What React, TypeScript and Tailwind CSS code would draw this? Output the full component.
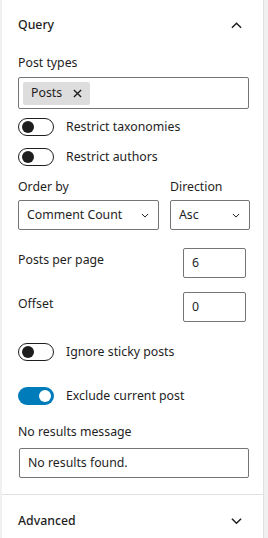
import React from "react";

function Chevron({ up = false, className = "" }: { up?: boolean; className?: string }) {
  return (
    <svg viewBox="0 0 12 8" className={className} fill="none" stroke="#1e1e1e" strokeWidth="1.6">
      {up ? <path d="M1 7 L6 2 L11 7" /> : <path d="M1 1.5 L6 6.5 L11 1.5" />}
    </svg>
  );
}

function Toggle({ on = false, label }: { on?: boolean; label: string }) {
  return (
    <div className="flex h-[20px] items-center">
      <div
        className={
          on
            ? "flex h-[18px] w-[36px] items-center justify-end rounded-full bg-[#007cba] pr-[3px]"
            : "flex h-[18px] w-[36px] items-center rounded-full border border-[#1e1e1e] bg-white pl-[3px]"
        }
      >
        <div className={on ? "h-[12px] w-[12px] rounded-full bg-white" : "h-[12px] w-[12px] rounded-full bg-[#1e1e1e]"} />
      </div>
      <span className="ml-[12px] text-[12.3px] text-[#1e1e1e]">{label}</span>
    </div>
  );
}

function Select({ value, className }: { value: string; className: string }) {
  return (
    <div className={"flex h-[30px] items-center justify-between rounded-[2px] border border-[#757575] pl-[8px] pr-[9px] " + className}>
      <span className="text-[12.3px] text-[#1e1e1e]">{value}</span>
      <Chevron className="h-[5px] w-[8px]" />
    </div>
  );
}

function NumberRow({ label, value, className }: { label: string; value: string; className: string }) {
  return (
    <div className={"flex items-start justify-between " + className}>
      <span className="pt-[3px] text-[12.3px] text-[#1e1e1e]">{label}</span>
      <div className="mr-[1px] flex h-[30px] w-[63px] items-center rounded-[2px] border border-[#757575] px-[8px] text-[12.3px] text-[#1e1e1e]">
        {value}
      </div>
    </div>
  );
}

export default function App() {
  return (
    <div
      className="flex h-[538px] w-[268px] overflow-hidden bg-[#f0f0f0] leading-[18px]"
      style={{ fontFamily: '"Segoe UI", "Noto Sans", sans-serif' }}
    >
      <div className="ml-[2px] w-[262px] border-r border-[#e0e0e0] bg-white">
        {/* Query panel */}
        <div className="border-b border-[#e0e0e0] pb-[16px]">
          <div className="flex h-[50px] items-center justify-between pl-[16px] pr-[21px]">
            <span className="text-[12.3px] font-medium text-[#1e1e1e]">Query</span>
            <Chevron up className="h-[8px] w-[11px]" />
          </div>

          <div className="px-[16px]">
            <div className="mt-[4px] text-[12.3px] text-[#1e1e1e]">Post types</div>
            <div className="mt-[5px] flex h-[32px] w-[231px] items-center rounded-[2px] border border-[#757575] px-[4px]">
              <div className="flex h-[23px] items-center rounded-[2px] bg-[#dddddd] pl-[8px] pr-[8px] text-[12.3px] text-[#1e1e1e]">
                Posts
                <svg viewBox="0 0 10 10" className="ml-[11px] h-[9px] w-[9px]" stroke="#1e1e1e" strokeWidth="1.5">
                  <path d="M1 1 L9 9 M9 1 L1 9" />
                </svg>
              </div>
            </div>

            <div className="mt-[8px]">
              <Toggle label="Restrict taxonomies" />
            </div>
            <div className="mt-[10px]">
              <Toggle label="Restrict authors" />
            </div>

            <div className="mt-[11px] flex gap-[11px]">
              <div className="flex flex-col">
                <span className="text-[12.3px] text-[#1e1e1e]">Order by</span>
                <Select value="Comment Count" className="mt-[4px] w-[141px]" />
              </div>
              <div className="flex flex-col">
                <span className="text-[12.3px] text-[#1e1e1e]">Direction</span>
                <Select value="Asc" className="mt-[4px] w-[80px]" />
              </div>
            </div>

            <NumberRow label="Posts per page" value="6" className="mt-[18px]" />
            <NumberRow label="Offset" value="0" className="mt-[14px]" />

            <div className="mt-[20px]">
              <Toggle label="Ignore sticky posts" />
            </div>
            <div className="mt-[24px]">
              <Toggle on label="Exclude current post" />
            </div>

            <div className="mt-[17px] text-[12.3px] text-[#1e1e1e]">No results message</div>
            <div className="ml-[1px] mt-[7px] flex h-[30px] w-[230px] items-center rounded-[2px] border border-[#757575] px-[8px] text-[12.3px] text-[#1e1e1e]">
              No results found.
            </div>
          </div>
        </div>

        {/* Advanced panel */}
        <div className="flex h-[52px] items-center justify-between pl-[16px] pr-[21px]">
          <span className="text-[12.3px] font-medium text-[#1e1e1e]">Advanced</span>
          <Chevron className="h-[8px] w-[11px]" />
        </div>
      </div>
    </div>
  );
}
